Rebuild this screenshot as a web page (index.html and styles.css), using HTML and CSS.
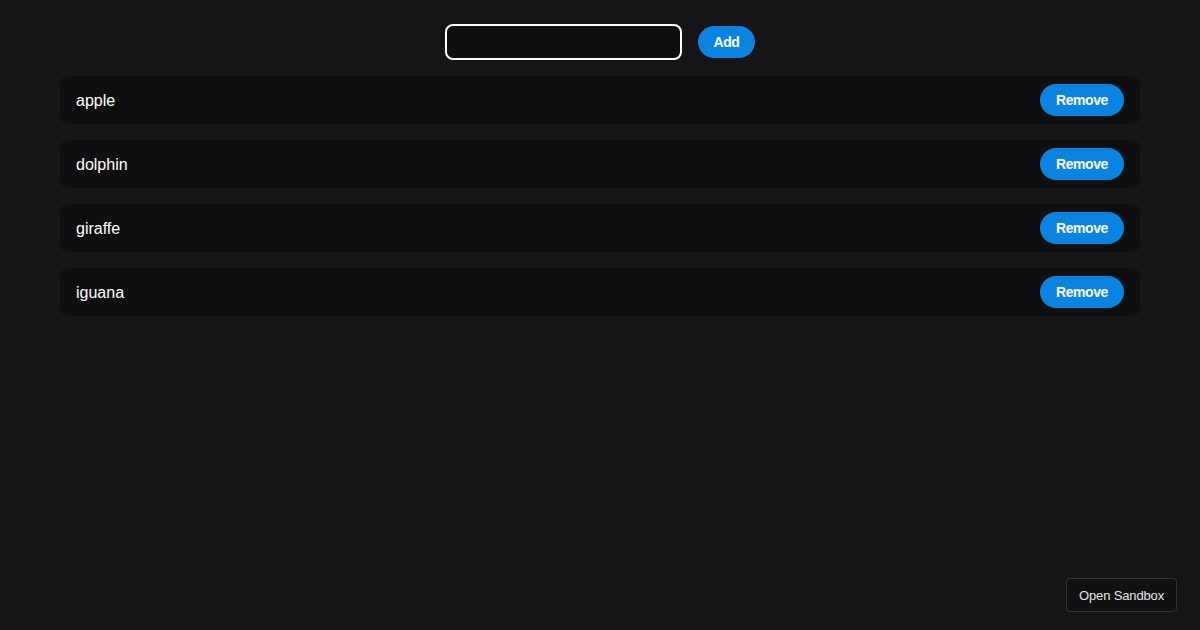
FILE: index.html
```html
<!DOCTYPE html>
<html>
<head>
<meta charset="utf-8">
<link rel="stylesheet" href="styles.css">
</head>
<body>
<main class="app">
  <form class="add-row">
    <input class="add-input" type="text">
    <button type="button" class="btn btn-add">Add</button>
  </form>
  <ul class="list">
    <li class="item"><span class="item-name">apple</span><button type="button" class="btn">Remove</button></li>
    <li class="item"><span class="item-name">dolphin</span><button type="button" class="btn">Remove</button></li>
    <li class="item"><span class="item-name">giraffe</span><button type="button" class="btn">Remove</button></li>
    <li class="item"><span class="item-name">iguana</span><button type="button" class="btn">Remove</button></li>
  </ul>
</main>
<a class="sandbox-link">Open Sandbox</a>
</body>
</html>
```
FILE: styles.css
```css
html, body {
  margin: 0;
  padding: 0;
  background: #151517;
  color: #ffffff;
  font-family: "Liberation Sans", Arial, sans-serif;
  height: 100%;
}
.app {
  width: 1080px;
  margin: 0 auto;
  padding-top: 24px;
  display: flex;
  flex-direction: column;
  gap: 16px;
}
.add-row {
  display: flex;
  justify-content: center;
  align-items: center;
  gap: 16px;
  margin: 0;
}
.add-input {
  box-sizing: border-box;
  width: 237px;
  height: 36px;
  border: 2px solid #ffffff;
  border-radius: 8px;
  background: #0f0f11;
  color: #fff;
  outline: none;
  padding: 0 10px;
  font: inherit;
}
.btn {
  height: 32px;
  padding: 0 16px;
  border: none;
  border-radius: 16px;
  background: #0a84e0;
  color: #ffffff;
  font-family: "Liberation Sans", Arial, sans-serif;
  font-weight: 700;
  font-size: 14px;
  letter-spacing: -0.4px;
}
.btn-add {
  padding: 0 15px;
}
.list {
  list-style: none;
  margin: 0;
  padding: 0;
  display: flex;
  flex-direction: column;
  gap: 16px;
}
.item {
  height: 48px;
  box-sizing: border-box;
  display: flex;
  align-items: center;
  justify-content: space-between;
  padding: 0 16px;
  background: #0f0f11;
  border-radius: 8px;
}
.item-name {
  font-size: 16px;
  padding-top: 2px;
}
.sandbox-link {
  position: fixed;
  right: 23px;
  bottom: 18px;
  box-sizing: border-box;
  height: 34px;
  padding: 0 12px;
  display: flex;
  align-items: center;
  border: 1px solid #343436;
  border-radius: 4px;
  background: #111113;
  color: #e6e6e6;
  font-size: 13px;
  letter-spacing: -0.15px;
}
```
